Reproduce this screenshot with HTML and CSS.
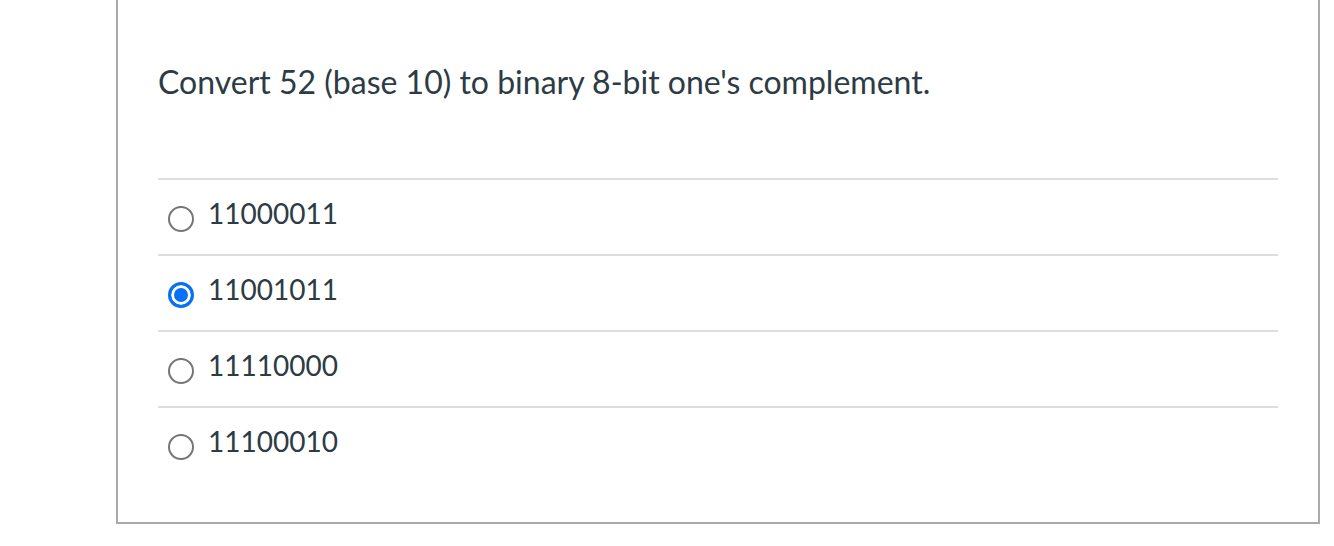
FILE: index.html
```html
<!DOCTYPE html>
<html>
<head>
<meta charset="utf-8">
<link rel="stylesheet" href="styles.css">
</head>
<body>
<div class="quiz-box">
  <div class="question">Convert 52 (base 10) to binary 8-bit one's complement.</div>
  <div class="answers">
    <label class="answer"><span class="radio"></span><span class="answer-text">11000011</span></label>
    <label class="answer"><span class="radio checked"></span><span class="answer-text">11001011</span></label>
    <label class="answer"><span class="radio"></span><span class="answer-text">11110000</span></label>
    <label class="answer"><span class="radio"></span><span class="answer-text">11100010</span></label>
  </div>
</div>
</body>
</html>
```

FILE: styles.css
```css
html, body {
  margin: 0;
  padding: 0;
  background: #ffffff;
}
body {
  font-family: Lato, "Liberation Sans", sans-serif;
  color: #2d3b45;
}
.quiz-box {
  margin-left: 116px;
  width: 1204px;
  box-sizing: border-box;
  border: 2px solid #aaaaaa;
  border-top: none;
  padding: 0 40px 40px 40px;
}
.question {
  font-size: 32px;
  line-height: 40px;
  padding-top: 62px;
  margin-bottom: 76px;
}
.answers {
  display: flex;
  flex-direction: column;
}
.answer {
  display: flex;
  align-items: center;
  height: 76px;
  box-sizing: border-box;
  border-top: 2px solid #dddddd;
  padding-left: 10px;
  gap: 14px;
  font-size: 28px;
}
.radio {
  width: 26px;
  height: 26px;
  box-sizing: border-box;
  border: 2px solid #767676;
  border-radius: 50%;
  background: #fff;
  flex: none;
  margin-top: 3px;
}
.radio.checked {
  border: 3px solid #0770f5;
  background: #0770f5;
  box-shadow: inset 0 0 0 3px #fff;
}
.answer-text {
  line-height: 34px;
  margin-bottom: 8px;
}
```
